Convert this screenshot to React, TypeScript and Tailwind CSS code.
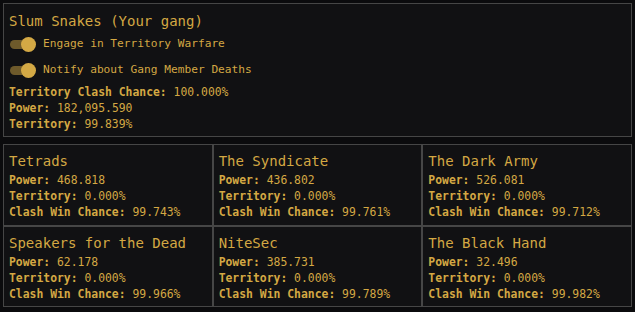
import React from "react";

const gangs = [
  { name: "Tetrads", power: "468.818", territory: "0.000%", clash: "99.743%" },
  { name: "The Syndicate", power: "436.802", territory: "0.000%", clash: "99.761%" },
  { name: "The Dark Army", power: "526.081", territory: "0.000%", clash: "99.712%" },
  { name: "Speakers for the Dead", power: "62.178", territory: "0.000%", clash: "99.966%" },
  { name: "NiteSec", power: "385.731", territory: "0.000%", clash: "99.789%" },
  { name: "The Black Hand", power: "32.496", territory: "0.000%", clash: "99.982%" },
];

function Toggle({ label }: { label: string }) {
  return (
    <div className="flex items-center h-[26px]">
      <div className="relative w-[26px] h-[15px] ml-[1px] mr-[7px] flex items-center">
        <div className="w-[24px] h-[9px] rounded-full bg-[#6e5a2b]" />
        <div className="absolute right-0 top-0 w-[15px] h-[15px] rounded-full bg-[#d4a945]" />
      </div>
      <span className="text-[11.2px]">{label}</span>
    </div>
  );
}

function Stat({ k, v }: { k: string; v: string }) {
  return (
    <div className="h-[16px] leading-[16px] text-[11.4px] whitespace-nowrap">
      <span className="font-bold">{k}</span> {v}
    </div>
  );
}

export default function App() {
  return (
    <div
      className="w-[635px] h-[312px] bg-[#0b0b0d] p-[3px] text-[#d4a843]"
      style={{ fontFamily: '"DejaVu Sans Mono", "Liberation Mono", monospace' }}
    >
      <div className="border border-[#464646] bg-[#111113] h-[134px] px-[5px] pt-[7px]">
        <div className="text-[14px] leading-[20px] h-[20px]">Slum Snakes (Your gang)</div>
        <div>
          <Toggle label="Engage in Territory Warfare" />
          <Toggle label="Notify about Gang Member Deaths" />
        </div>
        <div className="mt-[1px]">
          <Stat k="Territory Clash Chance:" v="100.000%" />
          <Stat k="Power:" v="182,095.590" />
          <Stat k="Territory:" v="99.839%" />
        </div>
      </div>
      <div className="grid grid-cols-3 mt-[7px]">
        {gangs.map((g, i) => (
          <div
            key={g.name}
            className={
              "border border-[#464646] bg-[#111113] px-[5px] pt-[6px] " +
              (i < 3 ? "h-[82px]" : "h-[81px]")
            }
          >
            <div className="text-[14px] leading-[20px] h-[21px] whitespace-nowrap">{g.name}</div>
            <Stat k="Power:" v={g.power} />
            <Stat k="Territory:" v={g.territory} />
            <Stat k="Clash Win Chance:" v={g.clash} />
          </div>
        ))}
      </div>
    </div>
  );
}
